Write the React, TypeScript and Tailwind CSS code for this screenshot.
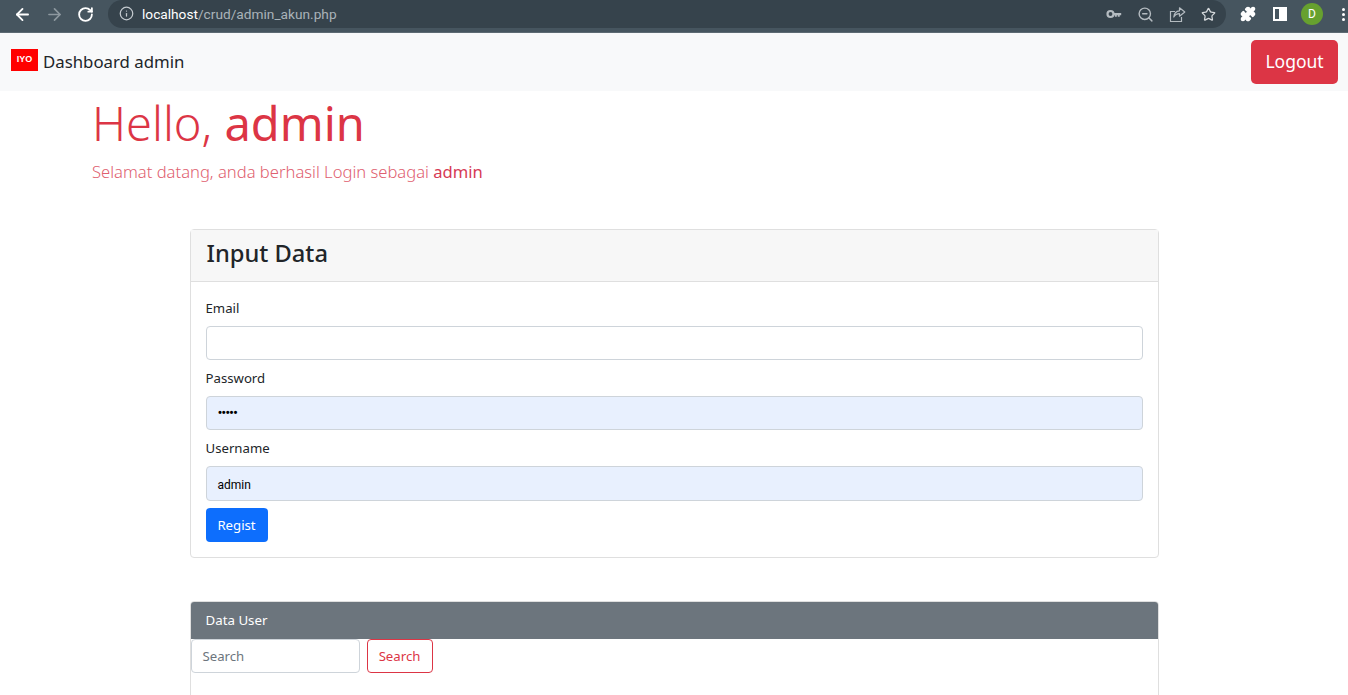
import React from 'react';
import { ArrowLeft, ArrowRight, RotateCw, Info, ZoomOut, Star, Puzzle } from 'lucide-react';

const font = "font-['Noto_Sans','Open_Sans',sans-serif]";

const Field = ({ label, value, password, tall }: { label: string; value?: string; password?: boolean; tall?: boolean }) => (
  <div>
    <label className="block h-[28px] text-[13.2px] leading-[24px] text-[#212529]">{label}</label>
    <div
      className={`mt-[2px] flex items-center rounded-[4px] border border-[#ced4da] px-[11px] font-['Roboto',sans-serif] text-[12px] text-black ${
        tall ? 'h-[35px] pt-[2px]' : 'h-[34px]'
      } ${value ? 'bg-[#e8f0fe]' : 'bg-white'}`}
    >
      {password ? <span className="text-[15px] leading-none tracking-[-1.2px]">•••••</span> : value}
    </div>
  </div>
);

const KeyIcon = () => (
  <svg width="16" height="16" viewBox="0 0 16 16" fill="none">
    <circle cx="4.5" cy="8" r="3" stroke="currentColor" strokeWidth="2.2" />
    <path d="M7.5 6.9h7.7v2.3h-1.5v1.6h-1.9V9.2h-1v1.6H8.9V9.2H7.5z" fill="currentColor" />
  </svg>
);

const ShareIcon = () => (
  <svg width="17" height="17" viewBox="0 0 17 17" fill="none" stroke="currentColor" strokeWidth="1.2">
    <path d="M6 5.5H1.5v10h11V11" />
    <path d="M10.5 1.8 15.8 6l-5.3 4.2V7.7C7.8 7.7 6 8.8 4.8 11c.3-3.6 2.4-5.9 5.7-6.2z" strokeLinejoin="round" />
  </svg>
);

const BrowserBar = () => (
  <div className="flex h-[33px] items-start justify-between border-b border-[#5d6a73] bg-[#46555f] text-white">
    <div className="flex h-[28px] w-[108px] items-center pl-[13px]">
      <ArrowLeft size={19} strokeWidth={2.3} />
      <ArrowRight size={19} strokeWidth={2.1} className="ml-[13px] text-[#8d989f]" />
      <RotateCw size={17} strokeWidth={2.6} className="ml-[13px]" />
    </div>
    <div className="flex h-[28px] flex-1 items-center justify-between rounded-[14px] bg-[#36434c] pl-[11px] pr-[10px]">
      <div className="flex items-center gap-[8px] font-['Roboto',sans-serif] text-[13.7px]">
        <Info size={15} className="text-[#c4cacf]" />
        <span>
          <span className="text-white">localhost</span>
          <span className="text-[#aab3b9]">/crud/admin_akun.php</span>
        </span>
      </div>
      <div className="flex items-center gap-[15px] text-[#b4bbc0]">
        <KeyIcon />
        <ZoomOut size={17} />
        <ShareIcon />
        <Star size={15} strokeWidth={2} className="text-[#d5d9dc]" />
      </div>
    </div>
    <div className="flex h-[28px] w-[122px] items-center pl-[14px]">
      <Puzzle size={16} fill="white" />
      <div className="ml-[17px] flex h-[14px] w-[14px] justify-end border-2 border-white">
        <div className="w-[6px] bg-white" />
      </div>
      <div className="ml-[14px] flex h-[22px] w-[22px] items-center justify-center rounded-full bg-[#67a12f] font-['Roboto',sans-serif] text-[12px]">
        D
      </div>
      <div className="ml-[19px] flex flex-col gap-[2px]">
        <span className="h-[3px] w-[3px] rounded-full bg-white" />
        <span className="h-[3px] w-[3px] rounded-full bg-white" />
        <span className="h-[3px] w-[3px] rounded-full bg-white" />
      </div>
    </div>
  </div>
);

export default function App() {
  return (
    <div className={`h-[695px] w-[1348px] overflow-hidden bg-white ${font}`}>
      <BrowserBar />

      <nav className="flex h-[58px] items-center justify-between bg-[#f8f9fa] pl-[11px] pr-[10px]">
        <div className="flex items-center gap-[5px]">
          <div className="mb-[5px] flex h-[22px] w-[27px] items-center justify-center bg-[#ff0000] pt-[1px] font-['Liberation_Sans',sans-serif] text-[9px] font-bold text-white">
            IYO
          </div>
          <span className="mb-[1px] text-[16.8px] text-[#212529]">Dashboard admin</span>
        </div>
        <button className="h-[44px] w-[87px] rounded-[5px] bg-[#dc3545] pb-[2px] text-[17.5px] text-white">Logout</button>
      </nav>

      <section className="pl-[92px] text-[#dc3545]">
        <h1 className="mt-[-1px] h-[66px] text-[47px] font-light leading-[66px]">
          Hello, <span className="font-normal">admin</span>
        </h1>
        <p className="mt-[3px] text-[16.6px] font-light leading-[26px] text-[#e0606f]">
          Selamat datang, anda berhasil Login sebagai <span className="font-normal text-[#d63a55]">admin</span>
        </p>
      </section>

      <div className="mx-auto mt-[44px] w-[969px]">
        <div className="rounded-[4px] border border-[#dfdfdf]">
          <div className="flex h-[52px] items-center border-b border-[#dfdfdf] bg-[#f7f7f7] px-[15px] pb-[4px]">
            <h2 className="pl-[1px] text-[23.7px] font-medium text-[#212529]">Input Data</h2>
          </div>
          <div className="px-[15px] pb-[15px] pt-[14px]">
            <Field label="Email" />
            <div className="mt-[6px]">
              <Field label="Password" value="admin" password />
            </div>
            <div className="mt-[6px]">
              <Field label="Username" value="admin" tall />
            </div>
            <button className="mt-[7px] h-[34px] w-[62px] rounded-[4px] bg-[#0d6efd] pt-[1px] text-[13.2px] text-white">
              Regist
            </button>
          </div>
        </div>

        <div className="mt-[43px] h-[200px] rounded-[4px] border border-[#dfdfdf]">
          <div className="flex h-[37px] items-center rounded-t-[3px] bg-[#6c757d] px-[15px] text-[13.3px] text-white">
            Data User
          </div>
          <div className="flex gap-[7px]">
            <div className="flex h-[34px] w-[169px] items-center rounded-[4px] border border-[#ced4da] px-[11px] pt-[1px] text-[13.2px] text-[#6c757d]">
              Search
            </div>
            <button className="h-[34px] w-[66px] rounded-[4px] border border-[#dc3545] pt-[1px] text-[13.2px] text-[#dc3545]">
              Search
            </button>
          </div>
        </div>
      </div>
    </div>
  );
}
